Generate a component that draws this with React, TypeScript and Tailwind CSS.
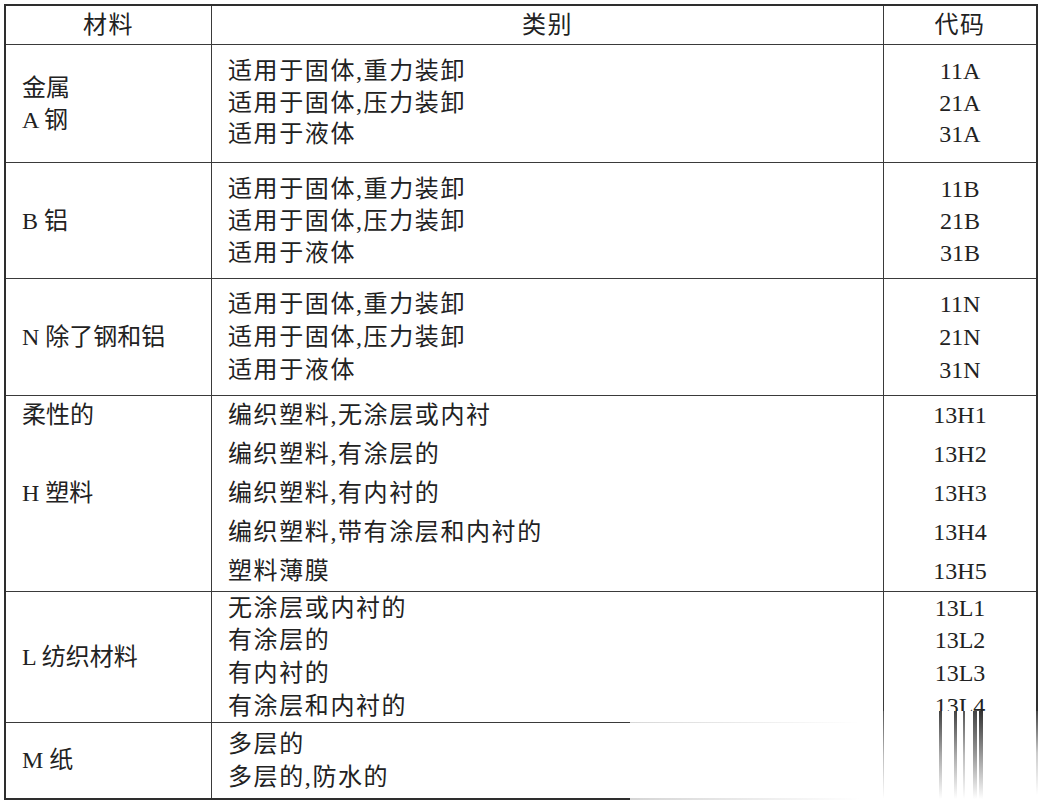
import React from "react";

type RowProps = {
  h: string;
  lead: string;
  leadA?: string;
  a: string[];
  b: string[];
  c: string[];
  last?: boolean;
};

function Lines({ items, cls }: { items: string[]; cls: string }) {
  return (
    <div className={cls}>
      {items.map((t, i) => (
        <div key={i} className="whitespace-pre">
          {t === "" ? "\u00a0" : t}
        </div>
      ))}
    </div>
  );
}

function Row({ h, lead, leadA, a, b, c, last }: RowProps) {
  return (
    <div className={`flex ${h} ${last ? "" : "border-b border-[#3a3a3a]"}`}>
      <div className="w-[206px] shrink-0 border-r border-[#3a3a3a] flex items-center pl-[16px]">
        <Lines items={a} cls={leadA ?? lead} />
      </div>
      <div className="w-[672px] shrink-0 border-r border-[#3a3a3a] flex items-center pl-[16px]">
        <Lines items={b} cls={`${lead} tracking-[1.6px]`} />
      </div>
      <div className="flex-1 flex items-center justify-center">
        <Lines items={c} cls={`${lead} text-center`} />
      </div>
    </div>
  );
}

const solidA = ["适用于固体,重力装卸", "适用于固体,压力装卸", "适用于液体"];

export default function App() {
  return (
    <div className="relative w-[1046px] h-[808px] bg-white overflow-hidden text-[#222] text-[24px] font-['Liberation_Serif','Noto_Sans_CJK_SC',serif]">
      <div className="pl-[4px] pt-[4px]">
        <div className="w-[1034px] border-2 border-[#2e2e2e]">
          {/* header */}
          <div className="flex h-[39px] border-b border-[#3a3a3a]">
            <div className="w-[206px] shrink-0 border-r border-[#3a3a3a] flex items-center justify-center tracking-[1.5px]">
              材料
            </div>
            <div className="w-[672px] shrink-0 border-r border-[#3a3a3a] flex items-center justify-center tracking-[1.5px]">
              类别
            </div>
            <div className="flex-1 flex items-center justify-center tracking-[1.5px]">
              代码
            </div>
          </div>
          <Row
            h="h-[118px]"
            lead="leading-[31.5px]"
            leadA="leading-[32px]"
            a={["金属", "A 钢"]}
            b={solidA}
            c={["11A", "21A", "31A"]}
          />
          <Row
            h="h-[116px]"
            lead="leading-[32px]"
            a={["B 铝"]}
            b={solidA}
            c={["11B", "21B", "31B"]}
          />
          <Row
            h="h-[117px]"
            lead="leading-[33px]"
            a={["N 除了钢和铝"]}
            b={solidA}
            c={["11N", "21N", "31N"]}
          />
          <Row
            h="h-[196px]"
            lead="leading-[39px]"
            a={["柔性的", "", "H 塑料", "", ""]}
            b={[
              "编织塑料,无涂层或内衬",
              "编织塑料,有涂层的",
              "编织塑料,有内衬的",
              "编织塑料,带有涂层和内衬的",
              "塑料薄膜",
            ]}
            c={["13H1", "13H2", "13H3", "13H4", "13H5"]}
          />
          <Row
            h="h-[131px]"
            lead="leading-[32.7px]"
            a={["L 纺织材料"]}
            b={["无涂层或内衬的", "有涂层的", "有内衬的", "有涂层和内衬的"]}
            c={["13L1", "13L2", "13L3", "13L4"]}
          />
          <Row
            h="h-[75px]"
            lead="leading-[33px]"
            a={["M 纸"]}
            b={["多层的", "多层的,防水的"]}
            c={["", ""]}
            last
          />
        </div>
      </div>

      {/* erased (whitened) bottom-right region of the scan */}
      <div className="absolute left-[630px] top-[711px] w-[416px] h-[97px] bg-linear-to-r from-white/80 via-white via-[55%] to-white">
        <div className="absolute left-[253px] top-0 w-[1px] h-[88px] bg-linear-to-b from-[#555] via-[#bbb] to-white/0" />
        <div className="absolute left-[406px] top-0 w-[2px] h-[84px] bg-linear-to-b from-[#444] via-[#ccc] to-white/0" />
        <div className="absolute left-[309px] top-0 w-[3px] h-[88px] bg-linear-to-b from-[#444] via-[#aaa] to-white/0" />
        <div className="absolute left-[324px] top-0 w-[3px] h-[88px] bg-linear-to-b from-[#444] via-[#aaa] to-white/0" />
        <div className="absolute left-[333px] top-0 w-[2px] h-[88px] bg-linear-to-b from-[#555] via-[#bbb] to-white/0" />
        <div className="absolute left-[343px] top-0 w-[4px] h-[88px] bg-linear-to-b from-[#444] via-[#999] to-white/0" />
        <div className="absolute left-[349px] top-0 w-[4px] h-[88px] bg-linear-to-b from-[#333] via-[#999] to-white/0" />
      </div>
    </div>
  );
}
